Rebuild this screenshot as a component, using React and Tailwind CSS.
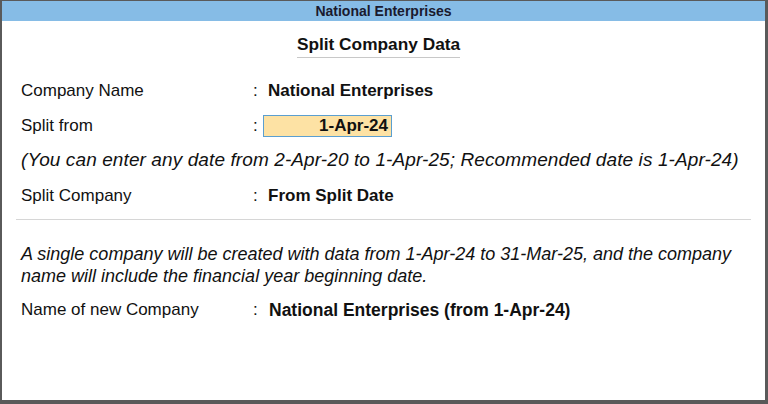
export default function App() {
  const label = 'w-[232px] shrink-0'
  return (
    <div
      className="h-[404px] w-[768px] overflow-hidden bg-[#5a5a5a] pl-[2px] pr-[3px] pt-[1px] pb-[4px]"
      style={{ fontFamily: '"Liberation Sans", Arial, sans-serif' }}
    >
      <div className="flex h-full flex-col bg-white">
        <div className="flex h-[20px] items-center justify-center bg-[#86bce6] text-[14px] font-bold text-[#1a1a2e]">
          National Enterprises
        </div>

        <div className="mt-[13px] flex justify-center pr-[10px]">
          <div className="border-b border-[#c8c8c8] pb-[3px] text-[17.3px] font-bold leading-[20px] text-[#111]">
            Split Company Data
          </div>
        </div>

        <div className="mt-[15px] px-[19px] text-[17px] text-[#111]">
          <div className="flex h-[35px] items-center">
            <span className={label}>Company Name</span>
            <span className="w-[15px]">:</span>
            <span className="font-bold">National Enterprises</span>
          </div>
          <div className="flex h-[35px] items-center">
            <span className={label}>Split from</span>
            <span className="w-[10px]">:</span>
            <span className="flex h-[22px] w-[129px] items-center justify-end border border-[#5b9fd0] bg-[#fde2a4] pr-[3px] font-bold">
              1-Apr-24
            </span>
          </div>
          <div className="flex h-[35px] items-center text-[19px] italic tracking-[0.1px]">
            (You can enter any date from 2-Apr-20 to 1-Apr-25; Recommended date is 1-Apr-24)
          </div>
          <div className="flex h-[35px] items-center">
            <span className={label}>Split Company</span>
            <span className="w-[15px]">:</span>
            <span className="font-bold">From Split Date</span>
          </div>
        </div>

        <div className="mx-[14px] mt-[6px] border-t border-[#d6d6d6]" />

        <div className="mt-[23px] px-[19px] text-[18px] italic leading-[22px] text-[#111]">
          A single company will be created with data from 1-Apr-24 to 31-Mar-25, and the company name will include the financial year beginning date.
        </div>

        <div className="mt-[11px] flex h-[24px] items-center px-[19px] text-[17px] text-[#111]">
          <span className={label}>Name of new Company</span>
          <span className="w-[16px]">:</span>
          <span className="text-[17.5px] font-bold">National Enterprises (from 1-Apr-24)</span>
        </div>
      </div>
    </div>
  )
}
